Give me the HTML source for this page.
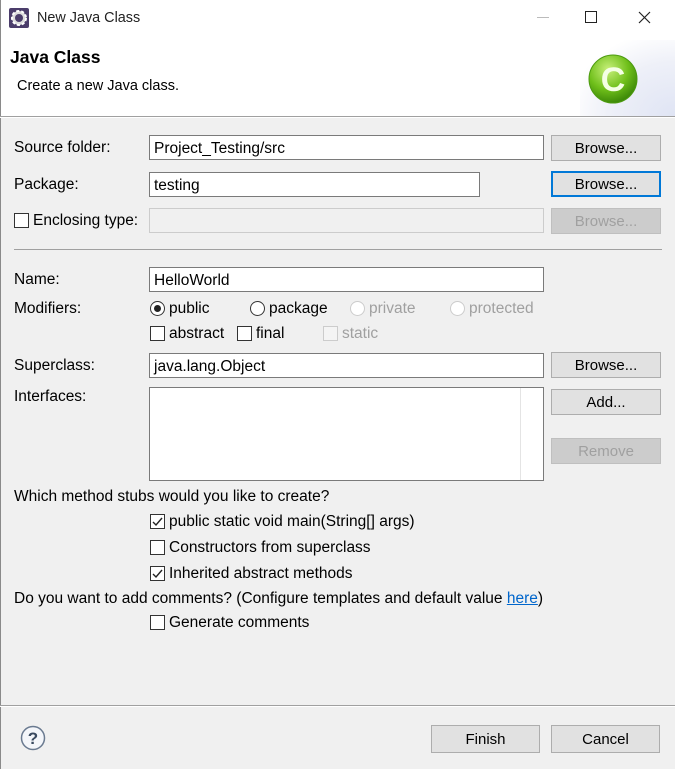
<!DOCTYPE html>
<html><head><style>
*{box-sizing:border-box;margin:0;padding:0}
body{width:675px;height:769px;background:#f0f0f0;font-family:"Liberation Sans",sans-serif;font-size:15.5px;color:#000;position:relative;overflow:hidden}
.a{position:absolute;white-space:nowrap}
.lbl{line-height:20px}
.f{position:absolute;background:#fff;border:1px solid #7a7a7a;height:25px;padding:4px 4px;line-height:17px}
.f.d{background:#f0f0f0;border-color:#cccccc}
.b{position:absolute;width:110px;height:26px;background:#e1e1e1;border:1px solid #adadad;text-align:center;line-height:26px;font-size:15px}
.b.foc{border:2px solid #0078d7;line-height:24px}
.b.dis{color:#a0a0a0;border-color:#bfbfbf;background:#cccccc}
.cb{position:absolute;width:15px;height:15px;border:1px solid #333;background:#fff}
.cb.d{border-color:#cccccc;background:#f4f4f4}
.rd{position:absolute;width:15px;height:15px;border:1px solid #333;border-radius:50%;background:#fff}
.rd.d{border-color:#cccccc}
.gray{color:#a0a0a0}
</style></head><body>
<div class="a" style="left:0;top:0;width:675px;height:117px;background:#fff"></div>
<div class="a" style="left:0;top:0;width:1px;height:769px;background:#8a8a8a"></div>
<svg class="a" style="left:9px;top:8px" width="20" height="20" viewBox="0 0 20 20"><rect x="0" y="0" width="20" height="20" rx="2" fill="#4b3d6b"/><circle cx="10" cy="10" r="7" fill="#ddd" stroke="#fff" stroke-width="2" stroke-dasharray="3 2"/><circle cx="10" cy="10" r="4" fill="#4b3d6b"/></svg>
<div class="a" style="left:37px;top:10px;font-size:14.4px;color:#222">New Java Class</div>
<div class="a" style="left:537px;top:17px;width:12px;height:1px;background:#bbb"></div>
<div class="a" style="left:585px;top:11px;width:12px;height:12px;border:1px solid #222"></div>
<svg class="a" style="left:638px;top:11px" width="13" height="13"><path d="M1 1L12 12M12 1L1 12" stroke="#222" stroke-width="1.2"/></svg>
<div class="a" style="left:10px;top:47px;font-weight:bold;font-size:17.5px">Java Class</div>
<div class="a" style="left:17px;top:78px;font-size:14.5px">Create a new Java class.</div>
<div class="a" style="left:580px;top:40px;width:95px;height:77px;background:radial-gradient(ellipse at 100% 100%,#dfe4f4 0%,#eef0f8 50%,#fff 80%)"></div>
<svg class="a" style="left:586px;top:53px" width="54" height="54" viewBox="0 0 54 54"><defs><radialGradient id="g" cx="40%" cy="30%" r="70%"><stop offset="0" stop-color="#c8f07a"/><stop offset="0.6" stop-color="#6fbf1a"/><stop offset="1" stop-color="#3e8a08"/></radialGradient></defs><circle cx="27" cy="26" r="24" fill="url(#g)" stroke="#4c9a10"/><text x="27" y="38" text-anchor="middle" font-family="Liberation Sans" font-weight="bold" font-size="34" fill="#f4ffe4">C</text></svg>
<div class="a" style="left:0;top:116px;width:675px;height:2px;background:#a0a0a0;border-bottom:1px solid #fff"></div>
<div class="a lbl" style="left:14px;top:138px">Source folder:</div>
<div class="f" style="left:149px;top:135px;width:395px">Project_Testing/src</div>
<div class="b" style="left:551px;top:135px">Browse...</div>
<div class="a lbl" style="left:14px;top:175px">Package:</div>
<div class="f" style="left:149px;top:172px;width:331px">testing</div>
<div class="b foc" style="left:551px;top:171px">Browse...</div>
<div class="cb" style="left:14px;top:213px"></div>
<div class="a lbl" style="left:33px;top:211px">Enclosing type:</div>
<div class="f d" style="left:149px;top:208px;width:395px"></div>
<div class="b dis" style="left:551px;top:208px">Browse...</div>
<div class="a" style="left:14px;top:249px;width:648px;height:1px;background:#a0a0a0"></div>
<div class="a lbl" style="left:14px;top:270px">Name:</div>
<div class="f" style="left:149px;top:267px;width:395px">HelloWorld</div>
<div class="a lbl" style="left:14px;top:299px">Modifiers:</div>
<div class="rd" style="left:150px;top:301px"><div style="position:absolute;left:3px;top:3px;width:7px;height:7px;border-radius:50%;background:#222"></div></div>
<div class="a lbl" style="left:169px;top:299px">public</div>
<div class="rd" style="left:250px;top:301px"></div>
<div class="a lbl" style="left:269px;top:299px">package</div>
<div class="rd d" style="left:350px;top:301px"></div>
<div class="a lbl gray" style="left:369px;top:299px">private</div>
<div class="rd d" style="left:450px;top:301px"></div>
<div class="a lbl gray" style="left:469px;top:299px">protected</div>
<div class="cb" style="left:150px;top:326px"></div>
<div class="a lbl" style="left:169px;top:324px">abstract</div>
<div class="cb" style="left:237px;top:326px"></div>
<div class="a lbl" style="left:256px;top:324px">final</div>
<div class="cb d" style="left:323px;top:326px"></div>
<div class="a lbl gray" style="left:342px;top:324px">static</div>
<div class="a lbl" style="left:14px;top:356px">Superclass:</div>
<div class="f" style="left:149px;top:353px;width:395px">java.lang.Object</div>
<div class="b" style="left:551px;top:352px">Browse...</div>
<div class="a lbl" style="left:14px;top:387px">Interfaces:</div>
<div class="f" style="left:149px;top:387px;width:395px;height:94px"><div style="position:absolute;right:22px;top:0;width:1px;height:92px;background:#e4e4e4"></div></div>
<div class="b" style="left:551px;top:389px">Add...</div>
<div class="b dis" style="left:551px;top:438px">Remove</div>
<div class="a lbl" style="left:14px;top:487px">Which method stubs would you like to create?</div>
<div class="cb" style="left:150px;top:514px"><svg width="13" height="13" style="position:absolute;left:0;top:0"><path d="M2 7L5 10L11 3" stroke="#222" stroke-width="1.4" fill="none"/></svg></div>
<div class="a lbl" style="left:169px;top:512px">public static void main(String[] args)</div>
<div class="cb" style="left:150px;top:540px"></div>
<div class="a lbl" style="left:169px;top:538px">Constructors from superclass</div>
<div class="cb" style="left:150px;top:566px"><svg width="13" height="13" style="position:absolute;left:0;top:0"><path d="M2 7L5 10L11 3" stroke="#222" stroke-width="1.4" fill="none"/></svg></div>
<div class="a lbl" style="left:169px;top:564px">Inherited abstract methods</div>
<div class="a lbl" style="left:14px;top:589px">Do you want to add comments? (Configure templates and default value <span style="color:#0066cc;text-decoration:underline">here</span>)</div>
<div class="cb" style="left:150px;top:615px"></div>
<div class="a lbl" style="left:169px;top:613px">Generate comments</div>
<div class="a" style="left:0;top:705px;width:675px;height:2px;background:#a0a0a0;border-bottom:1px solid #fff"></div>
<svg class="a" style="left:20px;top:725px" width="26" height="26" viewBox="0 0 26 26"><circle cx="13" cy="13" r="11.5" fill="#f4f6fa" stroke="#6a7a90" stroke-width="1.5"/><text x="13" y="19" text-anchor="middle" font-family="Liberation Sans" font-weight="bold" font-size="17" fill="#3a4a60">?</text></svg>
<div class="b" style="left:431px;top:725px;width:109px;height:28px;line-height:28px">Finish</div>
<div class="b" style="left:551px;top:725px;width:109px;height:28px;line-height:28px">Cancel</div>
</body></html>
